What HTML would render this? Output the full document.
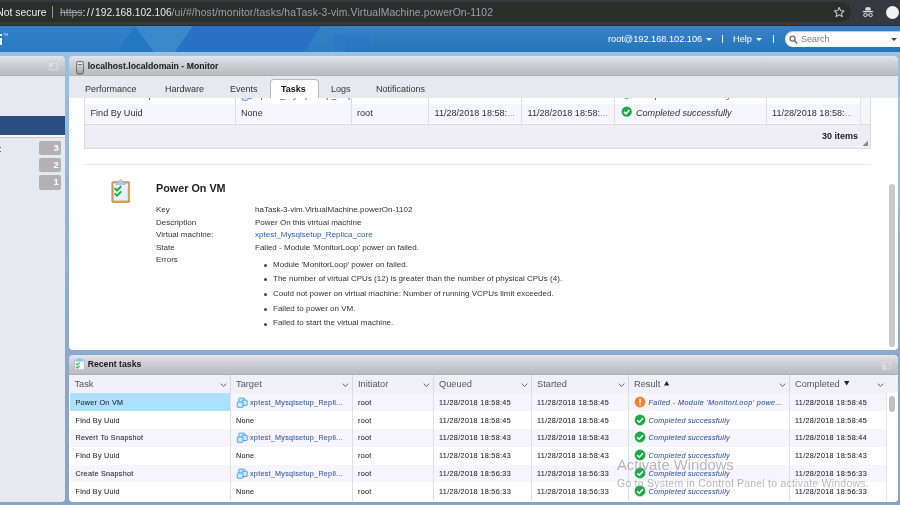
<!DOCTYPE html>
<html>
<head>
<meta charset="utf-8">
<title>ESXi</title>
<style>
*{box-sizing:border-box;margin:0;padding:0}
html,body{width:900px;height:505px;overflow:hidden;font-family:"Liberation Sans",sans-serif;}
body{background:linear-gradient(#97c2e2 52px,#8fb6db 200px,#8ba8cd 350px,#8aa2c4 505px);position:relative}
#root{position:absolute;left:0;top:0;width:900px;height:505px;overflow:hidden;will-change:transform}
.abs{position:absolute}
.t{position:absolute;white-space:nowrap}
#chrome{position:absolute;left:0;top:0;width:900px;height:26px;background:#35383c;border-bottom:1px solid #2b2c2f}
#pill{position:absolute;left:-20px;top:1.8px;width:871px;height:20.2px;border-radius:10px;background:#2b2f2c;}
#url{position:absolute;left:-3.8px;top:6px;font-size:10.4px;line-height:14px;color:#9aa0a6;white-space:nowrap;}
.w{color:#e8eaed}
#vmhead{position:absolute;left:0;top:26px;width:900px;height:26px;background:#2176bd;overflow:hidden}
#vmhead .t{color:#fff;font-size:9.2px;line-height:12px;}
#search{position:absolute;left:785px;top:5px;width:130px;height:16px;border-radius:8px;background:#fff;box-shadow:inset 0 1px 1px rgba(0,0,0,.25)}
.panel{position:absolute;border:1px solid transparent;border-radius:4px;overflow:hidden;background:linear-gradient(#e6e5ee,#d4d4db 30%,#c6c6cb 65%,#babcc0) 0 0/100% 19px no-repeat border-box, linear-gradient(#b1afb3,#b1afb3) 0 19px/100% 1.4px no-repeat border-box, #fff border-box}
#recent{background:linear-gradient(#e6e5ee,#d4d4db 30%,#c6c6cb 65%,#babcc0) 0 0/100% 19px no-repeat border-box, linear-gradient(#b1afb3,#b1afb3) 0 19px/100% 1.4px no-repeat border-box, linear-gradient(#f1f0f9,#f1f0f9) 0 20px/100% 18.4px no-repeat border-box, #fff border-box}
#main{background:linear-gradient(#e6e5ee,#d4d4db 30%,#c6c6cb 65%,#babcc0) 0 0/100% 19px no-repeat border-box, linear-gradient(#b1afb3,#b1afb3) 0 19px/100% 1.4px no-repeat border-box, linear-gradient(#e6e9ee,#e6e9ee) 0 20.4px/100% 21.3px no-repeat border-box, #fff border-box}
.phead{position:absolute;left:0;top:0;right:0;height:18.6px;}
.phead .ti{position:absolute;font-weight:bold;font-size:8.7px;line-height:12px;color:#1a1a1a;white-space:nowrap}
/* main panel */
#tabs{position:absolute;left:0;top:19.4px;right:0;height:21.3px;background:#e6e9ee}
#tabs .t{font-size:9px;line-height:12px;color:#333;top:7.1px}
#tabsel{position:absolute;left:200px;top:2.9px;width:49px;height:19px;background:#fff;border:1px solid #b5b8bc;border-bottom:none;border-radius:4px 4px 0 0}
.g1{position:absolute;font-size:9.1px;line-height:12px;color:#333;white-space:nowrap}
.kv{position:absolute;font-size:8.03px;line-height:12px;color:#333;white-space:nowrap}
.vl{position:absolute;background:#dcdce2;width:1px}
/* recent */
.rh{position:absolute;font-size:9.25px;line-height:12px;color:#555;white-space:nowrap;top:3px}
.rc{position:absolute;font-size:7.2px;line-height:12px;color:#262626;white-space:nowrap;letter-spacing:0.27px}
.lnk{color:#33579b}
.badge{position:absolute;left:48px;width:21.5px;height:14.2px;border-radius:2px;background:#b3b1b4;color:#fff;font-size:9.5px;line-height:14.2px;text-align:right;padding-right:1.8px;font-weight:bold}
.rr{position:absolute;left:0;width:817px;height:17.8px}
.rr .dt{letter-spacing:0.35px}
.rr .rc{top:3.5px;-webkit-text-stroke:0.07px currentColor}
</style>
</head>
<body>
<div id="root">
<svg width="0" height="0" style="position:absolute">
<defs>
<g id="okico"><circle cx="6" cy="6" r="5.4" fill="#1cab4a"/><path d="M3.2 6.2 L5.2 8.2 L8.9 4.2" fill="none" stroke="#fff" stroke-width="1.6"/></g>
<g id="failico"><circle cx="6" cy="6" r="5.4" fill="#f5822c"/><rect x="5.3" y="2.5" width="1.4" height="4.7" rx="0.5" fill="#fff"/><rect x="5.3" y="8.1" width="1.4" height="1.4" rx="0.4" fill="#fff"/></g>
<g id="vmico"><rect x="2.9" y="1.1" width="5.6" height="5.6" rx="0.5" fill="#c6ecfb" stroke="#4b9eee" stroke-width="0.95"/><rect x="6.2" y="3.2" width="5" height="5.3" rx="0.5" fill="#c6ecfb" stroke="#4b9eee" stroke-width="0.95"/><rect x="1.3" y="5" width="5.7" height="5.3" rx="0.5" fill="#c6ecfb" stroke="#4b9eee" stroke-width="0.95"/></g>
<g id="clipico"><rect x="0.8" y="2.4" width="18.4" height="21.4" rx="1.6" fill="#d79b54" stroke="#c98a44" stroke-width="0.6"/><rect x="2.7" y="4.6" width="14.6" height="17" fill="#e3f2fa"/><rect x="2.7" y="4.6" width="14.6" height="3" fill="#f4fafd"/><path d="M5 5.8 V4 Q5 3.2 6 3.2 H7.6 Q8.4 0.6 10 0.6 Q11.6 0.6 12.4 3.2 H14 Q15 3.2 15 4 V5.8 Z" fill="#b9c9e2" stroke="#8fa3c8" stroke-width="0.5"/><path d="M3.8 9.2 L6.2 11.5 L10.6 7.2" fill="none" stroke="#1fa83d" stroke-width="1.9"/><path d="M3.8 14.4 L6.2 16.7 L10.6 12.4" fill="none" stroke="#1fa83d" stroke-width="1.9"/></g>
<g id="chev"><path d="M0.7 0.6 L3.5 3.4 L6.3 0.6" fill="none" stroke="#555" stroke-width="0.95"/></g>
</defs></svg>
<div id="chrome">
  <div id="pill"></div>
  <div id="url"><span class="w">Not secure</span></div>
  <div class="abs" style="left:52.3px;top:6px;width:1.1px;height:11.5px;background:#8f959b"></div>
  <div id="url2" class="t" style="left:60px;top:6px;font-size:10.4px;line-height:14px;color:#9aa0a6"><span style="text-decoration:line-through">https</span><span class="w" style="letter-spacing:1.3px">://</span><span class="w" style="font-size:10.2px">192.168.102.106</span><span id="urlrest" style="letter-spacing:0.12px">/ui/#/host/monitor/tasks/haTask-3-vim.VirtualMachine.powerOn-1102</span></div>
  <svg class="abs" style="left:832.6px;top:5.9px" width="12.4" height="12.4" viewBox="0 0 14 14"><path d="M7 1.6 L8.6 5.2 L12.5 5.6 L9.6 8.2 L10.4 12 L7 10 L3.6 12 L4.4 8.2 L1.5 5.6 L5.4 5.2 Z" fill="none" stroke="#d0d2d6" stroke-width="1.15" stroke-linejoin="round"/></svg>
  <svg class="abs" style="left:861px;top:5px" width="14" height="14" viewBox="0 0 14 14"><path d="M4 5.5 L4.8 2.2 H9.2 L10 5.5 Z" fill="#dadce0"/><rect x="1.8" y="6" width="10.4" height="1.2" fill="#dadce0"/><circle cx="4.4" cy="10" r="1.7" fill="none" stroke="#dadce0" stroke-width="1"/><circle cx="9.6" cy="10" r="1.7" fill="none" stroke="#dadce0" stroke-width="1"/><path d="M6.1 9.8 H7.9" stroke="#dadce0" stroke-width="0.9"/></svg>
  <div class="abs" style="left:886px;top:5.5px;width:13px;height:13px;border-radius:50%;background:#f1f3f4"></div>
</div>
<div id="vmhead">
  <svg class="abs" style="left:0;top:0" width="900" height="26" viewBox="0 0 900 26">
    <defs><linearGradient id="hg" x1="0" y1="0" x2="0" y2="1"><stop offset="0" stop-color="#3a80c9"/><stop offset="1" stop-color="#2377bb"/></linearGradient>
    <linearGradient id="hg2" x1="0" y1="0" x2="0" y2="1"><stop offset="0" stop-color="#3081c8"/><stop offset="1" stop-color="#2a7cc2"/></linearGradient></defs>
    <rect x="0" y="0" width="900" height="26" fill="url(#hg)"/>
    <rect x="0" y="0" width="200" height="26" fill="url(#hg2)"/>
    <polygon points="135,0 117,26 154,26" fill="#2379bf"/>
    <polygon points="135,0 193,0 175,26 154,26" fill="#3c88cb"/>
    <polygon points="193,0 321,0 304,26 175,26" fill="#2a70c4"/>
    <polygon points="321,0 345,0 345,26 304,26" fill="#3380c7" opacity="0.6"/>
    <rect x="334" y="9" width="35" height="16" fill="#2d74c4" opacity="0.45"/>
  </svg>
  <div class="abs" style="left:0;top:11.5px;width:2px;height:7px;background:#fff"></div><div class="abs" style="left:0;top:8px;width:2px;height:1.8px;background:#fff"></div>
  <div class="t" style="left:3px;top:7px;font-size:3.6px;line-height:5px;opacity:.7">TM</div>
  <div class="t" style="left:608px;top:7px">root@192.168.102.106</div>
  <svg class="abs" style="left:706px;top:12px" width="6" height="3" viewBox="0 0 6 3"><path d="M0 0H6L3 3Z" fill="#fff"/></svg>
  <div class="abs" style="left:722px;top:9px;width:1px;height:8px;background:#e6eef8"></div>
  <div class="t" style="left:733px;top:7px">Help</div>
  <svg class="abs" style="left:756px;top:12px" width="6" height="3" viewBox="0 0 6 3"><path d="M0 0H6L3 3Z" fill="#fff"/></svg>
  <div class="abs" style="left:773px;top:9px;width:1px;height:8px;background:#e6eef8"></div>
  <div id="search">
    <svg class="abs" style="left:3.8px;top:3.6px" width="9" height="9" viewBox="0 0 10 10"><circle cx="4" cy="4" r="2.8" fill="none" stroke="#707070" stroke-width="1.5"/><path d="M6 6 L8.6 8.8" stroke="#707070" stroke-width="1.7" stroke-linecap="round"/></svg>
    <div class="t" style="left:16px;top:2px;font-size:9px;line-height:12px;color:#777">Search</div>
    <svg class="abs" style="left:106px;top:7px" width="6" height="3" viewBox="0 0 6 3"><path d="M0 0H6L3 3Z" fill="#444"/></svg>
  </div>
</div>

<!-- left panel -->
<div class="panel" id="left" style="left:-10px;top:56px;width:75px;height:446px;background-color:#e6e9ee;border-right:0;border-radius:0 4px 4px 0">
  <div class="phead"></div>
  <svg class="abs" style="left:58px;top:6px" width="9" height="8" viewBox="0 0 9 8"><rect x="0.5" y="0.5" width="7.5" height="6.5" fill="none" stroke="#dfdfe3" stroke-width="0.9"/><rect x="0.5" y="0.5" width="3.2" height="2.6" fill="#d9d9de" stroke="#dfdfe3" stroke-width="0.6"/></svg>
  <div class="abs" style="left:0;top:59.3px;width:76px;height:19px;background:#2b4d7f"></div>
  <div class="abs" style="left:0;top:78.3px;width:76px;height:1.5px;background:#f7f8fa"></div>
  <div class="abs" style="left:0;top:79.8px;width:76px;height:1px;background:#c9cacd"></div>
  <div class="badge" style="top:84.2px">3</div>
  <div class="badge" style="top:101.3px">2</div>
  <div class="badge" style="top:118.4px">1</div>
  <div class="abs" style="left:9px;top:90.2px;width:1.2px;height:1.2px;background:#666"></div>
  <div class="abs" style="left:9px;top:94.2px;width:1.2px;height:1.2px;background:#666"></div>
</div>

<!-- main panel -->
<div class="panel" id="main" style="left:69px;top:56px;width:829px;height:294px">
  <div class="phead"><svg class="abs" style="left:5.5px;top:3.5px" width="8" height="14" viewBox="0 0 8 14"><defs><linearGradient id="hostg" x1="0" y1="0" x2="0" y2="1"><stop offset="0" stop-color="#f4f4f4"/><stop offset="1" stop-color="#9a9a9a"/></linearGradient></defs><rect x="0.6" y="0.6" width="6.8" height="12.4" rx="1.6" fill="url(#hostg)" stroke="#5a5a5a" stroke-width="0.9"/><rect x="2" y="3" width="4" height="0.9" fill="#666"/><rect x="3.4" y="5.4" width="1.2" height="1" fill="#777"/></svg><div class="ti" style="left:17.7px;top:2.6px;font-size:8.7px">localhost.localdomain - Monitor</div></div>
  <div id="tabs">
    <div id="tabsel"></div>
    <div class="t" style="left:15px">Performance</div>
    <div class="t" style="left:95px">Hardware</div>
    <div class="t" style="left:160px">Events</div>
    <div class="t" style="left:211px;font-weight:bold;color:#111">Tasks</div>
    <div class="t" style="left:261px">Logs</div>
    <div class="t" style="left:306px">Notifications</div>
  </div>
  <!-- grid -->
  <div class="abs" id="grid" style="left:14px;top:41px;width:787px;height:51px;border:1px solid #dbdae1;border-top:none;background:#fff;overflow:hidden">
    <!-- previous (clipped) row -->
    <div class="g1" style="left:6px;top:-9.5px">Revert To Snapshot</div>
    <svg class="abs" style="left:156px;top:-8.5px" width="12" height="12" viewBox="0 0 12 12"><use href="#vmico"/></svg>
    <div class="g1 lnk" style="left:171px;top:-9.5px">xptest_Mysqlsetup_Repli...</div>
    <div class="g1" style="left:272px;top:-9.5px">root</div>
    <svg class="abs" style="left:535.6px;top:-10px" width="11.4" height="11.4" viewBox="0 0 12 12"><use href="#okico"/></svg>
    <div class="g1" style="left:551px;top:-9.5px;font-style:italic">Completed successfully</div>
    <div class="abs" style="left:0;top:6px;width:775px;height:18.5px;background:#f6f5fd"></div>
    <div class="abs" style="left:0;top:26px;width:785px;height:1px;background:#dcdce3"></div>
    <div class="abs" style="left:0;top:27px;width:785px;height:23px;background:#eeedf6"></div>
    <div class="abs" style="left:775px;top:0;width:10px;height:26px;background:#f6f6f8;border-left:1px solid #e0e0e5"></div>
    <div class="vl" style="left:150px;top:0;height:26px"></div>
    <div class="vl" style="left:266px;top:0;height:26px"></div>
    <div class="vl" style="left:343px;top:0;height:26px"></div>
    <div class="vl" style="left:436px;top:0;height:26px"></div>
    <div class="vl" style="left:529px;top:0;height:26px"></div>
    <div class="vl" style="left:681px;top:0;height:26px"></div>
    <div class="g1" style="left:5.5px;top:9px">Find By Uuid</div>
    <div class="g1" style="left:156px;top:9px">None</div>
    <div class="g1" style="left:272px;top:9px">root</div>
    <div class="g1" style="left:349.5px;top:9px">11/28/2018 18:58:<span style="color:#999">...</span></div>
    <div class="g1" style="left:442.5px;top:9px">11/28/2018 18:58:<span style="color:#999">...</span></div>
    <svg class="abs" style="left:535.6px;top:8.4px" width="11.4" height="11.4" viewBox="0 0 12 12"><use href="#okico"/></svg>
    <div class="g1" style="left:551px;top:9px;font-style:italic">Completed successfully</div>
    <div class="g1" style="left:687px;top:9px">11/28/2018 18:58:<span style="color:#999">...</span></div>
    <div class="g1" style="left:737px;top:32.1px;font-weight:bold;color:#222;font-size:9px">30 items</div>
    <svg class="abs" style="left:776.5px;top:41.5px" width="6.5" height="6.5" viewBox="0 0 7 7"><path d="M6.5 0.5 V6.5 H0.5 Z" fill="#8a8a92"/></svg>
  </div>
  <div class="abs" style="left:14px;top:107px;width:787px;height:1px;background:#e9e9ec"></div>
  <svg class="abs" style="left:40.6px;top:122.4px" width="19.4" height="24" viewBox="0 0 20 24" preserveAspectRatio="none"><use href="#clipico"/></svg>
  <div class="t" style="left:86px;top:124px;font-size:10.8px;line-height:14px;font-weight:bold;color:#222">Power On VM</div>
  <div class="kv" style="left:86px;top:147px">Key</div>
  <div class="kv" style="left:86px;top:159.5px">Description</div>
  <div class="kv" style="left:86px;top:172px">Virtual machine:</div>
  <div class="kv" style="left:86px;top:184.5px">State</div>
  <div class="kv" style="left:86px;top:197px">Errors</div>
  <div class="kv" style="left:185px;top:147px">haTask-3-vim.VirtualMachine.powerOn-1102</div>
  <div class="kv" style="left:185px;top:159.5px">Power On this virtual machine</div>
  <div class="kv" style="left:185px;top:172px;color:#2d62b4">xptest_Mysqlsetup_Replica_core</div>
  <div class="kv" style="left:185px;top:184.5px">Failed - Module 'MonitorLoop' power on failed.</div>
  <div class="abs" style="left:193.5px;top:206.7px;width:3px;height:3px;border-radius:50%;background:#444"></div><div class="kv" style="left:203px;top:201.5px">Module 'MonitorLoop' power on failed.</div>
  <div class="abs" style="left:193.5px;top:221.4px;width:3px;height:3px;border-radius:50%;background:#444"></div><div class="kv" style="left:203px;top:216.2px">The number of virtual CPUs (12) is greater than the number of physical CPUs (4).</div>
  <div class="abs" style="left:193.5px;top:236.1px;width:3px;height:3px;border-radius:50%;background:#444"></div><div class="kv" style="left:203px;top:230.9px">Could not power on virtual machine: Number of running VCPUs limit exceeded.</div>
  <div class="abs" style="left:193.5px;top:250.8px;width:3px;height:3px;border-radius:50%;background:#444"></div><div class="kv" style="left:203px;top:245.6px">Failed to power on VM.</div>
  <div class="abs" style="left:193.5px;top:265.5px;width:3px;height:3px;border-radius:50%;background:#444"></div><div class="kv" style="left:203px;top:260.3px">Failed to start the virtual machine.</div>
  <!-- scrollbar -->
    <div class="abs" style="left:819px;top:127px;width:6px;height:163px;background:#c9c9c9;border-radius:3px"></div>
</div>

<!-- recent tasks -->
<div class="panel" id="recent" style="left:69px;top:355px;width:829px;height:147px">
  <div class="phead"><svg class="abs" style="left:3.6px;top:2px" width="11" height="12.4" viewBox="0 0 11 12.4"><rect x="0.6" y="1.8" width="9.8" height="10" rx="1" fill="#f2f8fc" stroke="#aeb0ba" stroke-width="0.8"/><path d="M1.6 3.4 V2 Q1.6 1.2 2.6 1.2 H3.6 Q4.4 0 5.5 0 Q6.6 0 7.4 1.2 H8.4 Q9.4 1.2 9.4 2 V3.4 Z" fill="#8ec6ee"/><path d="M2 5.6 L3.4 6.9 L5.6 4.6" fill="none" stroke="#35c15c" stroke-width="1.3"/><path d="M2 8.8 L3.4 10.1 L5.6 7.8" fill="none" stroke="#35c15c" stroke-width="1.3"/></svg><div class="ti" style="left:17.7px;top:2.4px;font-size:8.7px">Recent tasks</div><svg class="abs" style="left:811.5px;top:6px" width="9" height="8" viewBox="0 0 9 8"><rect x="0.5" y="0.5" width="7.5" height="6.5" fill="none" stroke="#dfdfe3" stroke-width="0.9"/><rect x="0.5" y="3.6" width="3.4" height="3.4" fill="#d9d9de" stroke="#dfdfe3" stroke-width="0.6"/></svg></div>
  <div class="abs" id="rhead" style="left:0;top:18.5px;width:827px;height:19px;background:#f1f0f9;border-bottom:1px solid #e4e4ea">
    <div class="vl" style="left:160px;top:0;height:18px;background:#d5d8dd"></div>
<div class="vl" style="left:282px;top:0;height:18px;background:#d5d8dd"></div>
<div class="vl" style="left:363px;top:0;height:18px;background:#d5d8dd"></div>
<div class="vl" style="left:461px;top:0;height:18px;background:#d5d8dd"></div>
<div class="vl" style="left:558px;top:0;height:18px;background:#d5d8dd"></div>
<div class="vl" style="left:719px;top:0;height:18px;background:#d5d8dd"></div>
<svg class="abs" style="left:150px;top:8.2px" width="7" height="4" viewBox="0 0 7 4"><use href="#chev"/></svg>
<svg class="abs" style="left:272px;top:8.2px" width="7" height="4" viewBox="0 0 7 4"><use href="#chev"/></svg>
<svg class="abs" style="left:353px;top:8.2px" width="7" height="4" viewBox="0 0 7 4"><use href="#chev"/></svg>
<svg class="abs" style="left:451px;top:8.2px" width="7" height="4" viewBox="0 0 7 4"><use href="#chev"/></svg>
<svg class="abs" style="left:548px;top:8.2px" width="7" height="4" viewBox="0 0 7 4"><use href="#chev"/></svg>
<svg class="abs" style="left:709px;top:8.2px" width="7" height="4" viewBox="0 0 7 4"><use href="#chev"/></svg>
<svg class="abs" style="left:807px;top:8.2px" width="7" height="4" viewBox="0 0 7 4"><use href="#chev"/></svg>
<div class="rh" style="left:4.4px">Task</div>
    <div class="rh" style="left:166px">Target</div>
    <div class="rh" style="left:288px">Initiator</div>
    <div class="rh" style="left:369px">Queued</div>
    <div class="rh" style="left:467px">Started</div>
    <div class="rh" style="left:564px">Result</div><svg class="abs" style="left:593.6px;top:6.8px" width="5.4" height="4.6" viewBox="0 0 6 5"><path d="M0 5H6L3 0Z" fill="#222"/></svg>
    <div class="rh" style="left:725px">Completed</div><svg class="abs" style="left:774.2px;top:6.8px" width="5.4" height="4.6" viewBox="0 0 6 5"><path d="M0 0H6L3 5Z" fill="#222"/></svg>
  </div>
  <div class="abs" id="rbody" style="left:0;top:37.4px;width:827px;height:108px;background:#fff">
<div class="rr" style="top:0.0px;background:#f6f5fd">
<div class="abs" style="left:0;top:0;width:160px;height:17.8px;background:#ace1fd"></div>
<div class="rc" style="left:5.5px">Power On VM</div>
<svg class="abs" style="left:165.5px;top:3.4px" width="12" height="12" viewBox="0 0 12 12"><use href="#vmico"/></svg>
<div class="rc lnk" style="left:180px">xptest_Mysqlsetup_Repli...</div>
<div class="rc" style="left:288px">root</div>
<div class="rc dt" style="left:369px">11/28/2018 18:58:45</div>
<div class="rc dt" style="left:467px">11/28/2018 18:58:45</div>
<svg class="abs" style="left:563.6px;top:2.5px" width="12" height="12" viewBox="0 0 12 12"><use href="#failico"/></svg>
<div class="rc lnk" style="left:578.5px;font-style:italic;letter-spacing:0.4px">Failed - Module 'MonitorLoop' powe...</div>
<div class="rc dt" style="left:725px">11/28/2018 18:58:45</div>
</div>
<div class="rr" style="top:17.8px;background:#fff">
<div class="rc" style="left:5.5px">Find By Uuid</div>
<div class="rc" style="left:166px">None</div>
<div class="rc" style="left:288px">root</div>
<div class="rc dt" style="left:369px">11/28/2018 18:58:45</div>
<div class="rc dt" style="left:467px">11/28/2018 18:58:45</div>
<svg class="abs" style="left:563.6px;top:2.5px" width="12" height="12" viewBox="0 0 12 12"><use href="#okico"/></svg>
<div class="rc lnk" style="left:578.5px;font-style:italic">Completed successfully</div>
<div class="rc dt" style="left:725px">11/28/2018 18:58:45</div>
</div>
<div class="rr" style="top:35.6px;background:#f6f5fd">
<div class="rc" style="left:5.5px">Revert To Snapshot</div>
<svg class="abs" style="left:165.5px;top:3.4px" width="12" height="12" viewBox="0 0 12 12"><use href="#vmico"/></svg>
<div class="rc lnk" style="left:180px">xptest_Mysqlsetup_Repli...</div>
<div class="rc" style="left:288px">root</div>
<div class="rc dt" style="left:369px">11/28/2018 18:58:43</div>
<div class="rc dt" style="left:467px">11/28/2018 18:58:43</div>
<svg class="abs" style="left:563.6px;top:2.5px" width="12" height="12" viewBox="0 0 12 12"><use href="#okico"/></svg>
<div class="rc lnk" style="left:578.5px;font-style:italic">Completed successfully</div>
<div class="rc dt" style="left:725px">11/28/2018 18:58:44</div>
</div>
<div class="rr" style="top:53.4px;background:#fff">
<div class="rc" style="left:5.5px">Find By Uuid</div>
<div class="rc" style="left:166px">None</div>
<div class="rc" style="left:288px">root</div>
<div class="rc dt" style="left:369px">11/28/2018 18:58:43</div>
<div class="rc dt" style="left:467px">11/28/2018 18:58:43</div>
<svg class="abs" style="left:563.6px;top:2.5px" width="12" height="12" viewBox="0 0 12 12"><use href="#okico"/></svg>
<div class="rc lnk" style="left:578.5px;font-style:italic">Completed successfully</div>
<div class="rc dt" style="left:725px">11/28/2018 18:58:43</div>
</div>
<div class="rr" style="top:71.2px;background:#f6f5fd">
<div class="rc" style="left:5.5px">Create Snapshot</div>
<svg class="abs" style="left:165.5px;top:3.4px" width="12" height="12" viewBox="0 0 12 12"><use href="#vmico"/></svg>
<div class="rc lnk" style="left:180px">xptest_Mysqlsetup_Repli...</div>
<div class="rc" style="left:288px">root</div>
<div class="rc dt" style="left:369px">11/28/2018 18:56:33</div>
<div class="rc dt" style="left:467px">11/28/2018 18:56:33</div>
<svg class="abs" style="left:563.6px;top:2.5px" width="12" height="12" viewBox="0 0 12 12"><use href="#okico"/></svg>
<div class="rc lnk" style="left:578.5px;font-style:italic">Completed successfully</div>
<div class="rc dt" style="left:725px">11/28/2018 18:56:33</div>
</div>
<div class="rr" style="top:89.0px;background:#fff">
<div class="rc" style="left:5.5px">Find By Uuid</div>
<div class="rc" style="left:166px">None</div>
<div class="rc" style="left:288px">root</div>
<div class="rc dt" style="left:369px">11/28/2018 18:56:33</div>
<div class="rc dt" style="left:467px">11/28/2018 18:56:33</div>
<svg class="abs" style="left:563.6px;top:2.5px" width="12" height="12" viewBox="0 0 12 12"><use href="#okico"/></svg>
<div class="rc lnk" style="left:578.5px;font-style:italic">Completed successfully</div>
<div class="rc dt" style="left:725px">11/28/2018 18:56:33</div>
</div>
<div class="vl" style="left:160px;top:0;height:120px;background:#dcdfe4"></div>
<div class="vl" style="left:282px;top:0;height:120px;background:#dcdfe4"></div>
<div class="vl" style="left:363px;top:0;height:120px;background:#dcdfe4"></div>
<div class="vl" style="left:461px;top:0;height:120px;background:#dcdfe4"></div>
<div class="vl" style="left:558px;top:0;height:120px;background:#dcdfe4"></div>
<div class="vl" style="left:719px;top:0;height:120px;background:#dcdfe4"></div>
<div class="abs" style="left:816px;top:0;width:11px;height:120px;background:#fff;border-left:1px solid #e3e5e8"></div>
<div class="abs" style="left:819px;top:3px;width:6px;height:16px;background:#c1c1c1;border-radius:3px"></div>
</div>
</div>
<div class="t" id="wm1" style="left:617px;top:456px;font-size:14.8px;line-height:18px;color:rgba(140,140,145,.62)">Activate Windows</div>
<div class="t" id="wm2" style="left:617px;top:475.5px;font-size:10.5px;letter-spacing:0.23px;line-height:14px;color:rgba(140,140,145,.62)">Go to System in Control Panel to activate Windows.</div>
</div>
</body>
</html>
